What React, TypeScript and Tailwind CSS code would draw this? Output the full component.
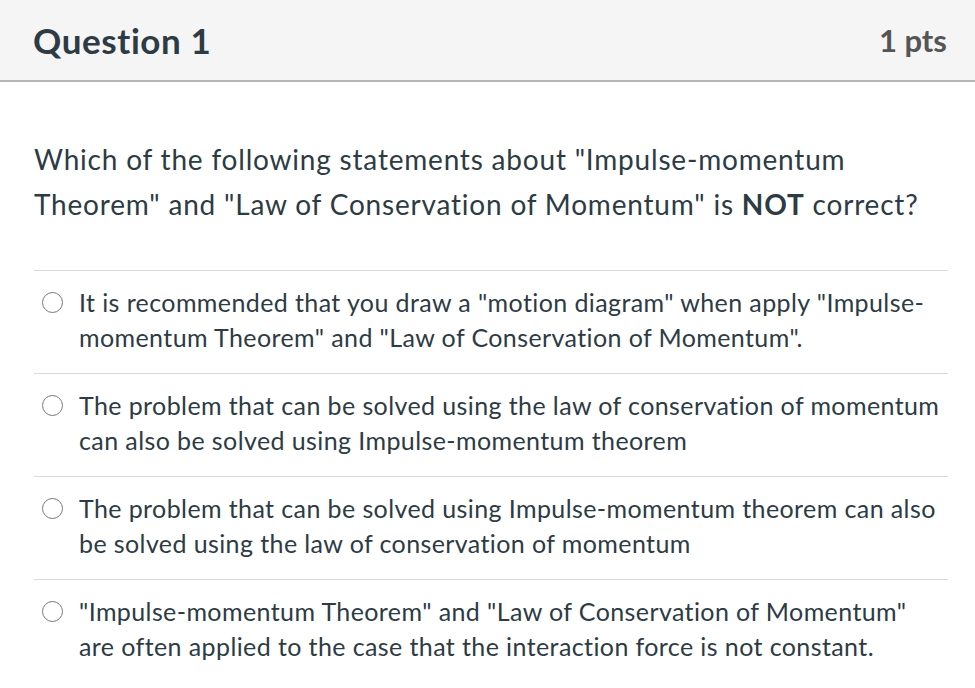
const answers = [
  'It is recommended that you draw a "motion diagram" when apply "Impulse-momentum Theorem" and "Law of Conservation of Momentum".',
  "The problem that can be solved using the law of conservation of momentum can also be solved using Impulse-momentum theorem",
  "The problem that can be solved using Impulse-momentum theorem can also be solved using the law of conservation of momentum",
  '"Impulse-momentum Theorem" and "Law of Conservation of Momentum" are often applied to the case that the interaction force is not constant.',
];

export default function App() {
  return (
    <div className="w-[975px] h-[688px] overflow-hidden bg-white font-['Lato',sans-serif] text-[#2d3b45] [font-variant-ligatures:none]">
      {/* header */}
      <div className="flex h-[82px] items-center justify-between border-b-2 border-[#b5b5b5] bg-[#f5f5f5] pl-[33px] pr-[28px]">
        <h2 className="text-[35px] font-bold tracking-[0.6px]">Question 1</h2>
        <span className="text-[31px] font-bold text-[#555]">1 pts</span>
      </div>

      <div className="px-[34px] pr-[27px]">
        <p className="pt-[55px] pb-[43px] text-[28px] leading-[45px] tracking-[0.8px]">
          Which of the following statements about "Impulse-momentum Theorem" and "Law of Conservation of
          Momentum" is <b>NOT</b> correct?
        </p>

        {answers.map((a, i) => (
          <div key={i} className="flex gap-[16px] border-t border-[#d9d9d9] pt-[14px] pb-[18px] pl-[8px]">
            <span className="mt-[7px] h-[21px] w-[21px] shrink-0 rounded-full border-[1.5px] border-[#777]" />
            <span className="text-[25px] leading-[35px] tracking-[0.4px]">{a}</span>
          </div>
        ))}
      </div>
    </div>
  );
}
